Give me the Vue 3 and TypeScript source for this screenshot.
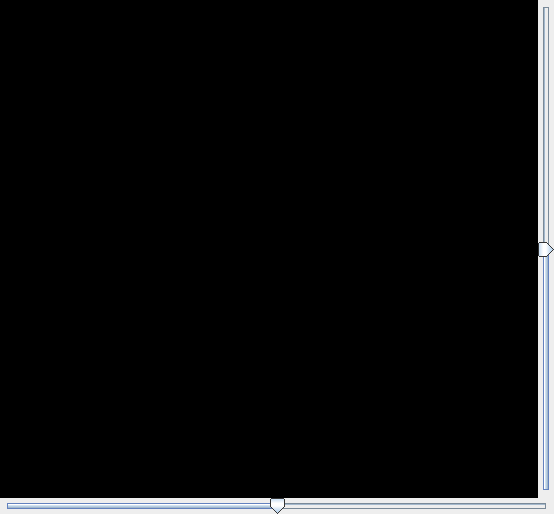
<script setup lang="ts">
import { ref } from 'vue'

const horizontal = ref<number>(50)
const vertical = ref<number>(50)
</script>

<template>
  <main class="viewer">
    <div class="upper">
      <div class="canvas"></div>
      <div class="slider vertical">
        <div class="track">
          <div class="fill" :style="{ height: vertical + '%' }"></div>
        </div>
        <input v-model.number="vertical" type="range" min="0" max="100" aria-label="Vertical" />
      </div>
    </div>
    <div class="slider horizontal">
      <div class="track">
        <div class="fill" :style="{ width: horizontal + '%' }"></div>
      </div>
      <input v-model.number="horizontal" type="range" min="0" max="100" aria-label="Horizontal" />
    </div>
  </main>
</template>

<style>
body {
  margin: 0;
}
</style>

<style scoped>
.viewer {
  display: flex;
  flex-direction: column;
  height: 100vh;
  background: #eeeeee;
}

.upper {
  display: flex;
  flex: 1;
  min-height: 0;
}

.canvas {
  flex: 1;
  background: #000000;
}

.slider {
  position: relative;
  display: flex;
  box-sizing: border-box;
}

.horizontal {
  height: 16px;
  padding: 5px 8px 5px 7px;
}

.vertical {
  width: 16px;
  padding: 7px 5px 8px;
}

.track {
  display: flex;
  flex: 1;
  box-sizing: border-box;
  border: 1px solid #7a8a99;
}

.horizontal .track {
  background: linear-gradient(to bottom, #a3b8cc 1px, transparent 1px);
}

.vertical .track {
  flex-direction: column;
  justify-content: flex-end;
  background: linear-gradient(to right, #a3b8cc 1px, transparent 1px);
}

.fill {
  box-sizing: content-box;
  border: 1px solid #6382bf;
  margin: -1px;
}

.horizontal .fill {
  background: linear-gradient(to bottom, #ffffff 1px, #d2e2ef 1px 2px, #b8cfe5 2px 3px, #a3b8cc 3px);
}

.vertical .fill {
  background: linear-gradient(to right, #ffffff 1px, #d2e2ef 1px 2px, #b8cfe5 2px 3px, #a3b8cc 3px);
}

input {
  position: absolute;
  inset: 0;
  width: 100%;
  height: 100%;
  margin: 0;
  appearance: none;
  background: transparent;
  outline: none;
}

.vertical input {
  writing-mode: vertical-lr;
  direction: rtl;
}

input::-webkit-slider-thumb {
  appearance: none;
  border: 0;
}

.horizontal input::-webkit-slider-thumb {
  width: 15px;
  height: 16px;
  background: url("data:image/svg+xml,%3Csvg xmlns='http://www.w3.org/2000/svg' width='15' height='16' shape-rendering='crispEdges'%3E%3Cdefs%3E%3ClinearGradient id='g' x1='0' y1='0' x2='0' y2='1'%3E%3Cstop stop-color='%23c8ddf2'/%3E%3Cstop offset='.3' stop-color='white'/%3E%3Cstop offset='.5' stop-color='white'/%3E%3Cstop offset='.8' stop-color='%23c8ddf2'/%3E%3Cstop offset='1' stop-color='%23b8cfe5'/%3E%3C/linearGradient%3E%3C/defs%3E%3Cpath fill='url(%23g)' d='M1 1H14V9H13V10H12V11H11V12H10V13H9V14H8V15H7V14H6V13H5V12H4V11H3V10H2V9H1Z'/%3E%3Cpath fill='%23333' d='M1 0h13v1H1zM0 1h1v8H0zM14 1h1v8h-1zM1 9h1v1H1zM2 10h1v1H2zM3 11h1v1H3zM4 12h1v1H4zM5 13h1v1H5zM6 14h1v1H6zM7 15h1v1H7zM8 14h1v1H8zM9 13h1v1H9zM10 12h1v1h-1zM11 11h1v1h-1zM12 10h1v1h-1zM13 9h1v1h-1z'/%3E%3C/svg%3E") no-repeat;
}

.vertical input::-webkit-slider-thumb {
  width: 16px;
  height: 15px;
  background: url("data:image/svg+xml,%3Csvg xmlns='http://www.w3.org/2000/svg' width='16' height='15' shape-rendering='crispEdges'%3E%3Cdefs%3E%3ClinearGradient id='g'%3E%3Cstop stop-color='%23c8ddf2'/%3E%3Cstop offset='.3' stop-color='white'/%3E%3Cstop offset='.5' stop-color='white'/%3E%3Cstop offset='.8' stop-color='%23c8ddf2'/%3E%3Cstop offset='1' stop-color='%23b8cfe5'/%3E%3C/linearGradient%3E%3C/defs%3E%3Cpath fill='url(%23g)' d='M1 1V14H9V13H10V12H11V11H12V10H13V9H14V8H15V7H14V6H13V5H12V4H11V3H10V2H9V1Z'/%3E%3Cpath fill='%23333' d='M0 1v13h1V1zM1 0v1h8V0zM1 14v1h8v-1zM9 1v1h1V1zM10 2v1h1V2zM11 3v1h1V3zM12 4v1h1V4zM13 5v1h1V5zM14 6v1h1V6zM15 7v1h1V7zM14 8v1h1V8zM13 9v1h1V9zM12 10v1h1v-1zM11 11v1h1v-1zM10 12v1h1v-1zM9 13v1h1v-1z'/%3E%3C/svg%3E") no-repeat;
}
</style>
